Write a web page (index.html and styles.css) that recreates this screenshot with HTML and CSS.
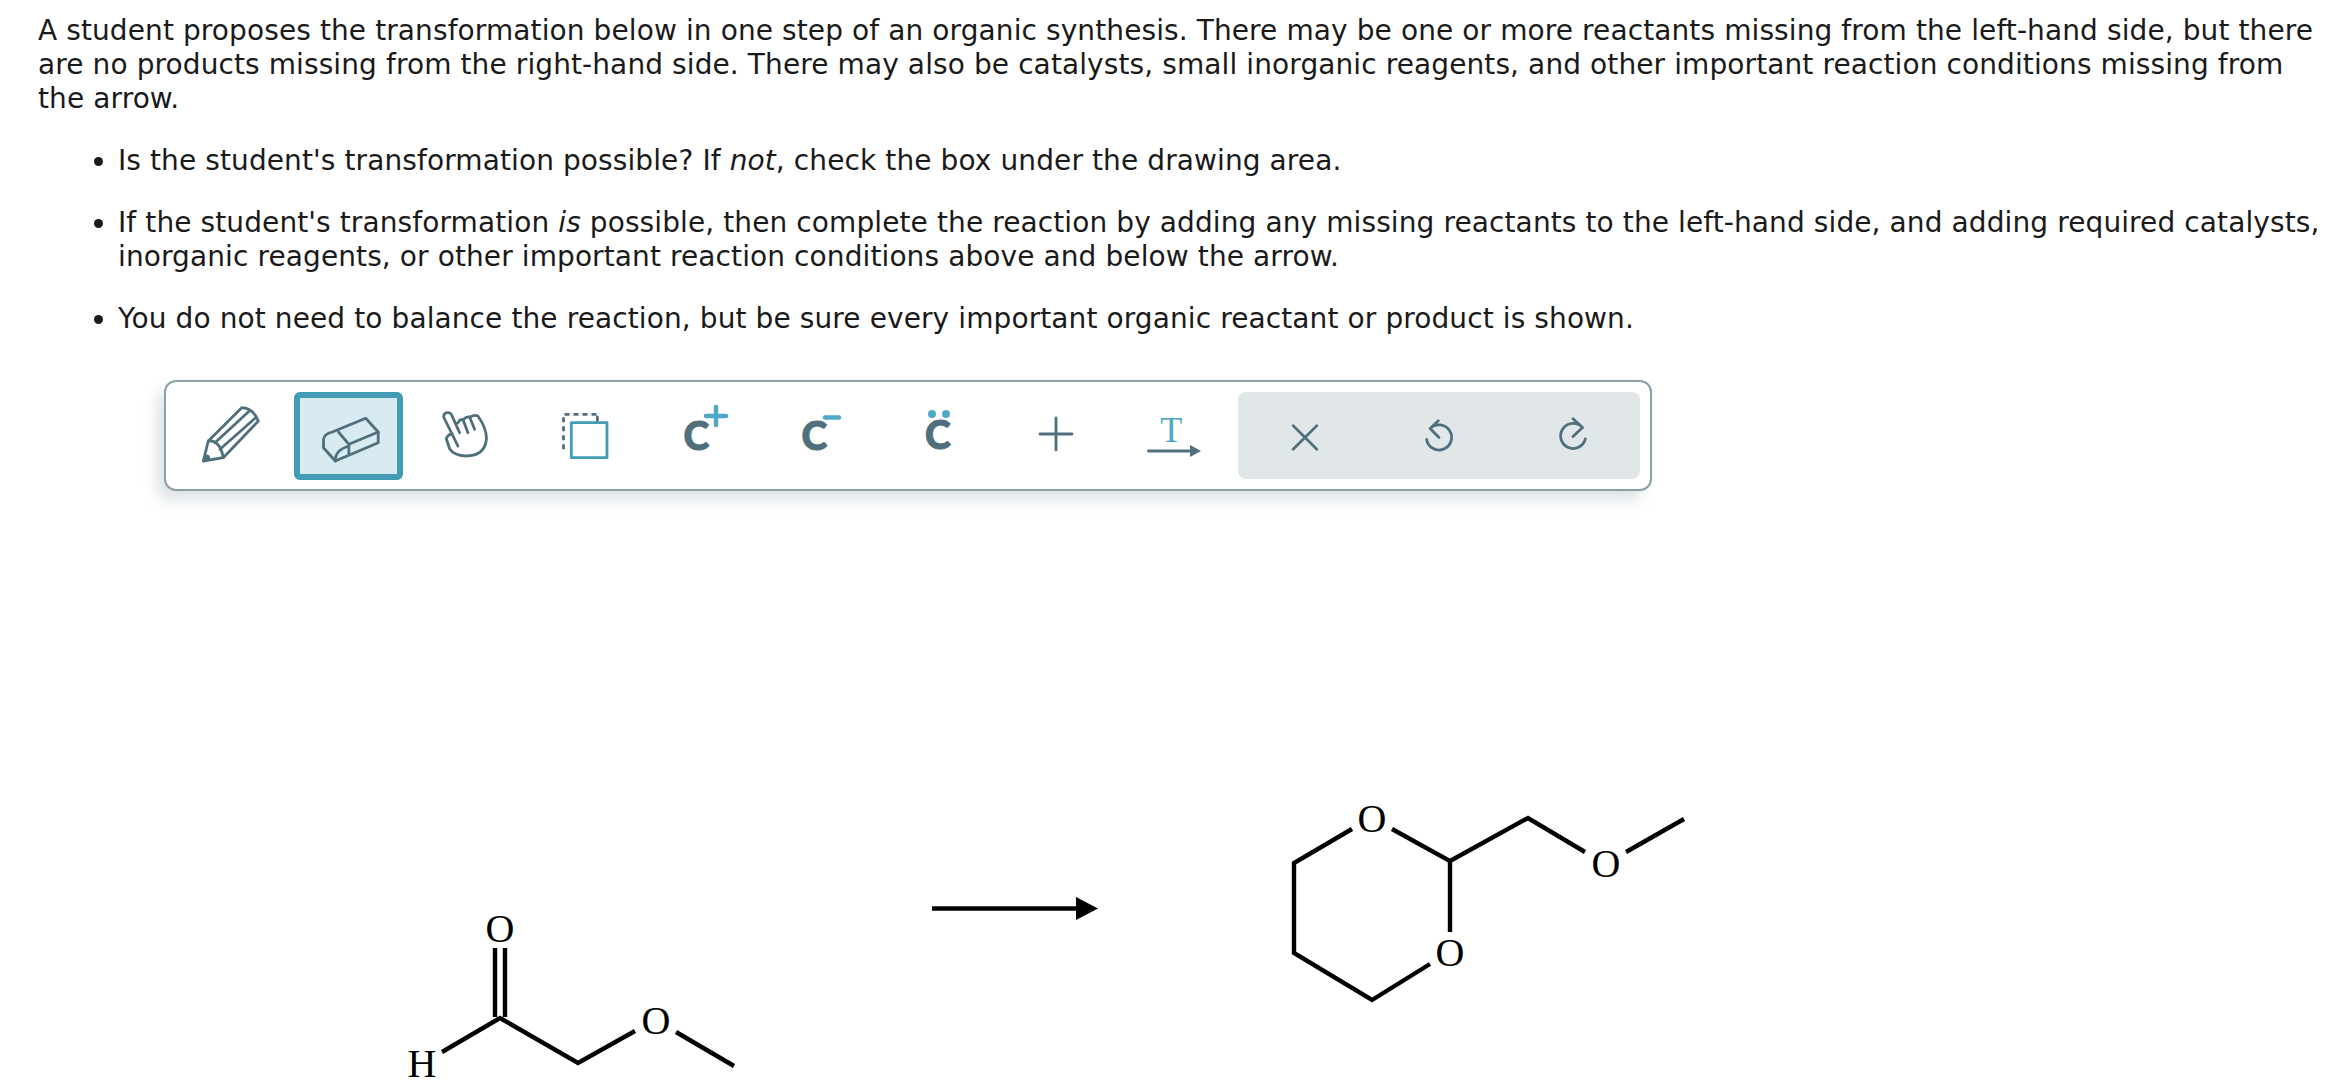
FILE: index.html
```html
<!DOCTYPE html>
<html lang="en">
<head>
    <meta charset="UTF-8">
    <title>Organic synthesis transformation</title>
    <link rel="stylesheet" href="styles.css">
</head>
<body>
    <div class="question">
        <p class="intro">A student proposes the transformation below in one step of an organic synthesis. There may be one or more reactants missing from the left-hand side, but there are no products missing from the right-hand side. There may also be catalysts, small inorganic reagents, and other important reaction conditions missing from the arrow.</p>
        <ul class="steps">
            <li>Is the student's transformation possible? If <em>not</em>, check the box under the drawing area.</li>
            <li>If the student's transformation <em>is</em> possible, then complete the reaction by adding any missing reactants to the left-hand side, and adding required catalysts, inorganic reagents, or other important reaction conditions above and below the arrow.</li>
            <li>You do not need to balance the reaction, but be sure every important organic reactant or product is shown.</li>
        </ul>
    </div>

    <div class="toolbar">
        <div class="tool">
            <svg viewBox="0 -1 109 88">
                <path class="line" d="M27.3 68L32.3 48L65.7 14.7Q77 15 82.3 28L47.3 64.7Z"/>
                <path class="line" d="M32.3 48Q44 47 47.3 64.7M39 49.7L73.3 18M44 56.3L79.7 24.7"/>
                <circle class="ink" cx="30.5" cy="65" r="3.6"/>
            </svg>
        </div>
        <div class="tool tool-active">
            <svg viewBox="0 -1 109 88">
                <path class="line" d="M71.7 25.3L84.2 39V49.7L41.3 68L29.5 54.7V46.3Q30 41 38.4 39Z"/>
                <path class="line" d="M44.5 39L54.9 51.3L84.2 39M54.9 51.3V61M41.3 68Q41 57 54.9 53"/>
            </svg>
        </div>
        <div class="tool">
            <svg viewBox="0 -1 109 88">
                <path class="line" d="M46.9 53L32.6 24Q32.5 19.7 36.9 19.7Q39 19.7 40.3 21.3L48.6 39.7M46.9 29.7Q48.5 26 51.9 26.3L56.9 39.7M52.5 26.5Q55 23.5 58.6 24L63.6 36.3M59.5 24Q63 21.5 66.9 23Q75.5 35 75.5 45.7Q74 63 55 63Q43 62.5 38.6 55.7L35.3 45.7Q37 41 41.5 41"/>
            </svg>
        </div>
        <div class="tool">
            <svg viewBox="0 -1 109 88">
                <path class="dash" d="M34.5 56.3V21.3H68.4"/>
                <path class="line" d="M68.4 24V28"/>
                <rect class="accent-line" x="42.3" y="29.7" width="35.7" height="35"/>
            </svg>
        </div>
        <div class="tool">
            <svg viewBox="0 -1 109 88">
                <text class="atom" x="49.5" y="56.5" text-anchor="middle">C</text>
                <path class="accent-bold" d="M69 14V32M59 23H79"/>
            </svg>
        </div>
        <div class="tool">
            <svg viewBox="0 -1 109 88">
                <text class="atom" x="50.5" y="56.5" text-anchor="middle">C</text>
                <path class="accent-bold" d="M61 24.5H75"/>
            </svg>
        </div>
        <div class="tool">
            <svg viewBox="0 -1 109 88">
                <text class="atom" x="56" y="55.5" text-anchor="middle">C</text>
                <circle class="accent-dot" cx="50" cy="21" r="4"/>
                <circle class="accent-dot" cx="64" cy="21" r="4"/>
            </svg>
        </div>
        <div class="tool">
            <svg viewBox="0 0 109 88">
                <path class="thin" d="M56 26V58M40 42H72"/>
            </svg>
        </div>
        <div class="tool">
            <svg viewBox="0 0 109 88">
                <text class="label-t" x="53.4" y="50" text-anchor="middle">T</text>
                <path class="line" d="M30.4 59H74"/>
                <path class="ink" d="M72 53L83 59L72 65Z"/>
            </svg>
        </div>
        <div class="tool-group">
            <div class="tool-wide">
                <svg viewBox="0 -2 134 88">
                    <path class="thin" d="M55 32L79 56M79 32L55 56"/>
                </svg>
            </div>
            <div class="tool-wide">
                <svg viewBox="0 -1 134 88">
                    <path class="thin" d="M66.3 28L58 36L67 45M58 36A12.7 12.7 0 1 1 54.5 47"/>
                </svg>
            </div>
            <div class="tool-wide">
                <svg viewBox="0 -1 134 88">
                    <path class="thin" d="M67 26L76.7 35L67 44M76.7 35A12.7 12.7 0 1 0 79.5 46.5"/>
                </svg>
            </div>
        </div>
    </div>

    <svg class="reaction" viewBox="0 0 2334 586">
        <g class="bonds" transform="translate(0 -500)">
            <path d="M495 948V1017M505 948V1017"/>
            <path d="M442 1052L500 1018L578 1063L635 1031M676 1032L734 1066"/>
            <path d="M1352 829L1294 863V953L1372 1000L1430 964M1450 932V861L1392 829M1450 861L1528 818L1585 852M1626 852L1684 819"/>
            <path d="M932 908.5H1080"/>
        </g>
        <path class="arrow-head" d="M1076 897L1098 908.5L1076 920Z" transform="translate(0 -500)"/>
        <g class="atoms" transform="translate(0 -500)" text-anchor="middle">
            <text x="500" y="941.5">O</text>
            <text x="656" y="1033.5">O</text>
            <text x="422" y="1077">H</text>
            <text x="1372" y="831.5">O</text>
            <text x="1450" y="965.5">O</text>
            <text x="1606" y="877">O</text>
        </g>
    </svg>
</body>
</html>
```

FILE: styles.css
```css
body {
    margin: 0;
    background: #ffffff;
    color: #1a1a1a;
    font-family: "DejaVu Sans", sans-serif;
    font-size: 28px;
    line-height: 34px;
    letter-spacing: 0.1px;
}

.question {
    padding: 14px 0 0 38px;
    width: 2290px;
}

.intro {
    margin: 0 0 28px;
}

.steps {
    margin: 0;
    padding-left: 80px;
}

.steps li {
    margin-bottom: 28px;
}

.toolbar {
    display: flex;
    gap: 8.7px;
    box-sizing: border-box;
    width: 1488px;
    height: 111px;
    margin: 44px 0 0 164px;
    padding: 10px;
    background: #ffffff;
    border: 2px solid #8ba0a8;
    border-radius: 12px;
    box-shadow: -8px 10px 16px -2px rgba(80, 110, 125, 0.22);
}

.tool {
    box-sizing: border-box;
    flex: 0 0 109px;
    height: 88px;
    border-radius: 6px;
}

.tool svg,
.tool-wide svg {
    display: block;
    width: 100%;
    height: 100%;
    overflow: visible;
}

.tool-active {
    background: #d7ebf1;
    outline: 6px solid #439bb5;
    outline-offset: -6px;
}

.tool-group {
    display: flex;
    flex: 0 0 402px;
    margin-left: 2.7px;
    background: #e1e6e8;
    border-radius: 8px;
}

.tool-wide {
    flex: 1;
}

.line,
.thin,
.dash,
.accent-line,
.accent-bold {
    fill: none;
    stroke: #4f6f7d;
    stroke-width: 2.8;
    stroke-linejoin: round;
}

.line,
.thin,
.accent-bold {
    stroke-linecap: round;
}

.dash {
    stroke-dasharray: 5 4;
}

.accent-line {
    stroke: #439bb5;
}

.accent-bold {
    stroke: #4fa9c6;
    stroke-width: 4.5;
}

.accent-dot {
    fill: #4fa9c6;
}

.ink {
    fill: #4f6f7d;
}

.atom {
    fill: #4f6f7d;
    stroke: #4f6f7d;
    stroke-width: 1;
    font-family: "Lato", sans-serif;
    font-size: 39px;
    font-weight: 900;
}

.label-t {
    fill: #4fa9c6;
    font-family: "Liberation Serif", serif;
    font-size: 36px;
}

.reaction {
    display: block;
    width: 2334px;
    height: 586px;
    margin-top: 9px;
}

.bonds path {
    fill: none;
    stroke: #000000;
    stroke-width: 4.4;
}

.arrow-head {
    fill: #000000;
}

.atoms text {
    fill: #000000;
    font-family: "Liberation Serif", serif;
    font-size: 40px;
}
```
